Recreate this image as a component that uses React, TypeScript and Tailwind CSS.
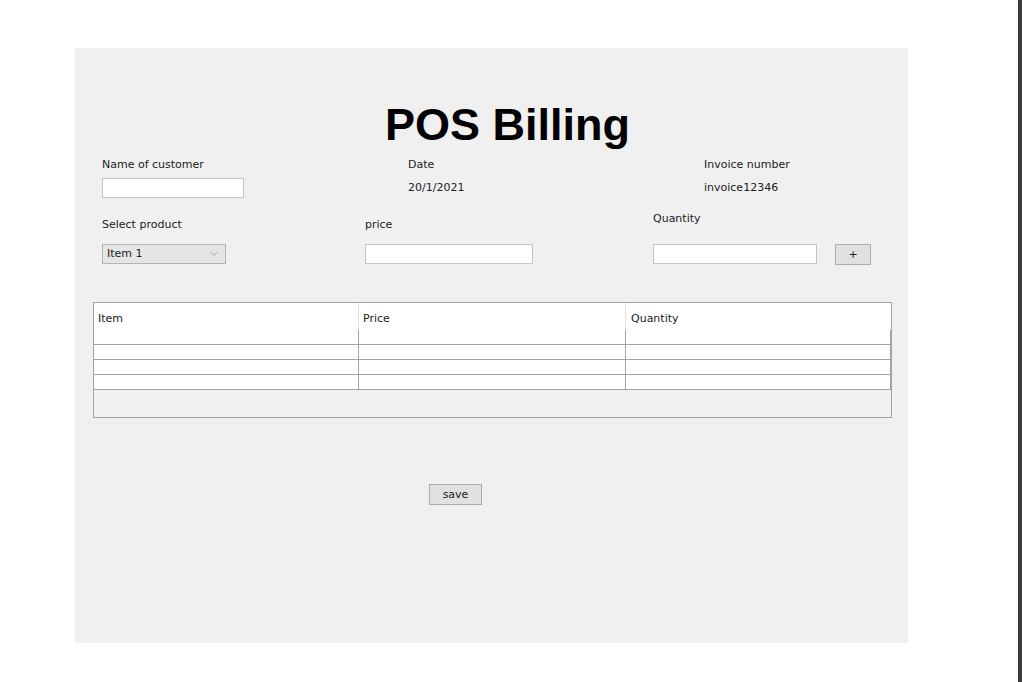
import { ChevronDown } from 'lucide-react';

const labelFont = { fontFamily: '"DejaVu Sans", Verdana, sans-serif' };

function TextBox({ width }: { width: string }) {
  return <div className={`${width} h-[20px] bg-white border border-[#c4c4c4]`} />;
}

export default function App() {
  const rows = [0, 1, 2, 3];

  return (
    <div className="flex w-full h-[682px] bg-white text-[#222]" style={labelFont}>
      <div className="pl-[75px] pt-[48px]">
        <div className="w-[833px] h-[595px] bg-[#f0f0f0] text-[11px] leading-4">
          {/* title */}
          <div className="pt-[54px] pl-[310px]">
            <h1
              className="text-[45px] leading-[45px] font-bold text-black"
              style={{ fontFamily: '"Liberation Sans", Arial, sans-serif' }}
            >
              POS Billing
            </h1>
          </div>

          {/* customer / date / invoice */}
          <div className="flex pl-[27px] mt-[10px]">
            <div className="w-[306px]">
              <p>Name of customer</p>
              <div className="mt-[5px]">
                <TextBox width="w-[142px]" />
              </div>
            </div>
            <div className="w-[296px]">
              <p>Date</p>
              <p className="mt-[7px]">20/1/2021</p>
            </div>
            <div>
              <p>Invoice number</p>
              <p className="mt-[7px]">invoice12346</p>
            </div>
          </div>

          {/* product / price / quantity */}
          <div className="flex items-start pl-[27px] mt-[12px]">
            <div className="w-[263px] pt-[7px]">
              <p>Select product</p>
              <div className="mt-[11px] w-[124px] h-[20px] flex items-center justify-between pl-[4px] pr-[5px] bg-[#e5e5e5] border border-[#b4b4b4]">
                <span>Item 1</span>
                <ChevronDown className="w-3 h-3 text-[#8a8a8a]" strokeWidth={1.5} />
              </div>
            </div>
            <div className="w-[288px] pt-[7px]">
              <p>price</p>
              <div className="mt-[11px]">
                <TextBox width="w-[168px]" />
              </div>
            </div>
            <div className="pt-[1px]">
              <p>Quantity</p>
              <div className="flex items-start mt-[17px]">
                <TextBox width="w-[164px]" />
                <button className="ml-[18px] w-[36px] h-[21px] bg-[#e1e1e1] border border-[#adadad] text-[11px] leading-none">
                  +
                </button>
              </div>
            </div>
          </div>

          {/* items table */}
          <div className="ml-[18px] mt-[37px] w-[799px] h-[116px] border border-[#a3a3a3] flex flex-col">
            <div className="grid grid-cols-[265px_267px_265px] h-[27px] bg-white">
              <div className="pl-[4px] pt-[8px] border-r border-[#e2e2e2]">Item</div>
              <div className="pl-[4px] pt-[8px] border-r border-[#e2e2e2]">Price</div>
              <div className="pl-[5px] pt-[8px]">Quantity</div>
            </div>
            {rows.map((r) => (
              <div key={r} className="grid grid-cols-[265px_267px_265px] h-[15px] bg-white border-b border-[#a3a3a3]">
                <div className="border-r border-[#a3a3a3]" />
                <div className="border-r border-[#a3a3a3]" />
                <div className="border-r border-[#a3a3a3]" />
              </div>
            ))}
            <div className="flex-1 bg-[#f0f0f0]" />
          </div>

          {/* save */}
          <div className="ml-[354px] mt-[66px]">
            <button className="w-[53px] h-[21px] bg-[#e1e1e1] border border-[#adadad] text-[11px] leading-none">
              save
            </button>
          </div>
        </div>
      </div>
      <div className="flex-1" />
      <div className="w-[4px] h-full bg-[#3c3c3c]" />
    </div>
  );
}
